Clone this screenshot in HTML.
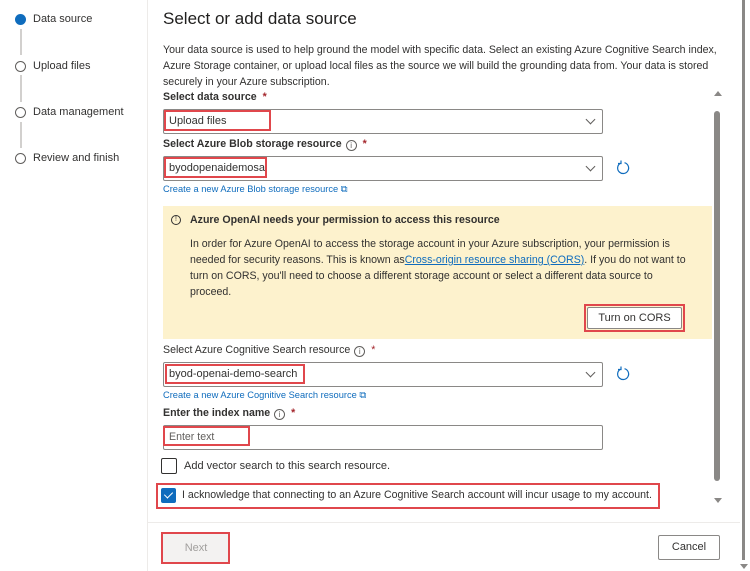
<!DOCTYPE html>
<html><head><meta charset="utf-8"><style>
*{margin:0;padding:0;box-sizing:border-box}
body{width:750px;height:571px;background:#fff;font-family:"Liberation Sans",sans-serif;color:#323130;position:relative;overflow:hidden;font-size:12px}
.a{position:absolute;white-space:nowrap}
.red{position:absolute;border:2px solid #e0474c}
.box{position:absolute;border:1px solid #8a8886;border-radius:2px;background:#fff}
.chev{position:absolute;width:7px;height:7px;border-right:1px solid #605e5c;border-bottom:1px solid #605e5c;transform:rotate(45deg)}
.lbl{font-weight:bold;color:#323130}
.info{display:inline-block;width:11px;height:11px;border:1px solid #605e5c;border-radius:50%;font-size:8px;text-align:center;line-height:9px;color:#605e5c;font-weight:normal;vertical-align:-1px;margin-left:4px}
.star{color:#a4262c;margin-left:6px}
.link{color:#0f6cbd;font-size:9.3px}
</style></head><body>
<div class="a" style="left:15px;top:14px;width:11px;height:11px;border-radius:50%;background:#0f6cbd"></div>
<div class="a" style="left:20px;top:29px;width:2px;height:26px;background:#d2d0ce"></div>
<div class="a" style="left:20px;top:75px;width:2px;height:27px;background:#d2d0ce"></div>
<div class="a" style="left:20px;top:122px;width:2px;height:26px;background:#d2d0ce"></div>
<div class="a" style="left:15px;top:61px;width:11px;height:11px;border-radius:50%;border:1px solid #605e5c"></div>
<div class="a" style="left:15px;top:107px;width:11px;height:11px;border-radius:50%;border:1px solid #605e5c"></div>
<div class="a" style="left:15px;top:153px;width:11px;height:11px;border-radius:50%;border:1px solid #605e5c"></div>
<div class="a" style="left:33px;top:13px;font-size:11px">Data source</div>
<div class="a" style="left:33px;top:60px;font-size:11px">Upload files</div>
<div class="a" style="left:33px;top:106px;font-size:11px">Data management</div>
<div class="a" style="left:33px;top:152px;font-size:11px">Review and finish</div>
<div class="a" style="left:147px;top:0;width:1px;height:571px;background:#edebe9"></div>

<div class="a" style="left:163px;top:9px;font-size:17px;color:#201f1e">Select or add data source</div>
<div class="a" style="left:163px;top:42px;font-size:10.6px;line-height:16px;white-space:normal;width:565px">Your data source is used to help ground the model with specific data. Select an existing Azure Cognitive Search index, Azure Storage container, or upload local files as the source we will build the grounding data from. Your data is stored securely in your Azure subscription.</div>

<div class="a lbl" style="left:163px;top:91px;font-size:10.6px">Select data source<span class="star">*</span></div>
<div class="box" style="left:163px;top:109px;width:440px;height:25px"></div>
<div class="chev" style="left:587px;top:116px"></div>
<div class="red" style="left:164px;top:110px;width:107px;height:21px"></div>
<div class="a" style="left:169px;top:115px;font-size:11px">Upload files</div>

<div class="a lbl" style="left:163px;top:138px;font-size:10.6px">Select Azure Blob storage resource<span class="info">i</span><span class="star">*</span></div>
<div class="box" style="left:163px;top:156px;width:440px;height:25px"></div>
<div class="chev" style="left:587px;top:163px"></div>
<div class="red" style="left:164px;top:157px;width:103px;height:21px"></div>
<div class="a" style="left:169px;top:162px;font-size:11px">byodopenaidemosa</div>
<svg class="a" style="left:615px;top:160px" width="16" height="16" viewBox="0 0 16 16"><path d="M5 3.5A5.5 5.5 0 1 0 9.5 2.7" fill="none" stroke="#0f6cbd" stroke-width="1.2"/><path d="M3 3.5h3v-3" fill="none" stroke="#0f6cbd" stroke-width="1.2"/></svg>
<div class="a link" style="left:163px;top:184px">Create a new Azure Blob storage resource ⧉</div>

<div class="a" style="left:163px;top:206px;width:549px;height:133px;background:#fdf2cd"></div>
<div class="a" style="left:171px;top:215px;width:10px;height:10px;border:1px solid #323130;border-radius:50%;font-size:7px;text-align:center;line-height:8px">!</div>
<div class="a" style="left:190px;top:214px;font-weight:bold;font-size:10.6px">Azure OpenAI needs your permission to access this resource</div>
<div class="a" style="left:190px;top:236px;font-size:10.6px;line-height:16px;white-space:normal;width:500px">In order for Azure OpenAI to access the storage account in your Azure subscription, your permission is needed for security reasons. This is known as<span style="color:#0f6cbd;text-decoration:underline">Cross-origin resource sharing (CORS)</span>. If you do not want to turn on CORS, you'll need to choose a different storage account or select a different data source to proceed.</div>
<div class="red" style="left:584px;top:304px;width:101px;height:28px"></div>
<div class="a" style="left:587px;top:307px;width:95px;height:22px;background:#fff;border:1px solid #8a8886;border-radius:2px;text-align:center;line-height:20px;font-size:11px">Turn on CORS</div>

<div class="a" style="left:163px;top:344px;font-size:10.6px">Select Azure Cognitive Search resource<span class="info">i</span><span class="star">*</span></div>
<div class="box" style="left:163px;top:362px;width:440px;height:25px"></div>
<div class="chev" style="left:587px;top:369px"></div>
<div class="red" style="left:165px;top:364px;width:140px;height:20px"></div>
<div class="a" style="left:169px;top:368px;font-size:11px">byod-openai-demo-search</div>
<svg class="a" style="left:615px;top:366px" width="16" height="16" viewBox="0 0 16 16"><path d="M5 3.5A5.5 5.5 0 1 0 9.5 2.7" fill="none" stroke="#0f6cbd" stroke-width="1.2"/><path d="M3 3.5h3v-3" fill="none" stroke="#0f6cbd" stroke-width="1.2"/></svg>
<div class="a link" style="left:163px;top:390px">Create a new Azure Cognitive Search resource ⧉</div>

<div class="a lbl" style="left:163px;top:407px;font-size:10.6px">Enter the index name<span class="info">i</span><span class="star">*</span></div>
<div class="box" style="left:163px;top:425px;width:440px;height:25px"></div>
<div class="red" style="left:163px;top:426px;width:87px;height:20px"></div>
<div class="a" style="left:169px;top:431px;font-size:10.6px;color:#605e5c">Enter text</div>

<div class="a" style="left:161px;top:458px;width:16px;height:16px;border:1px solid #323130;border-radius:2px"></div>
<div class="a" style="left:184px;top:460px;font-size:11px">Add vector search to this search resource.</div>
<div class="red" style="left:156px;top:483px;width:504px;height:26px"></div>
<div class="a" style="left:161px;top:488px;width:15px;height:15px;background:#0f6cbd;border-radius:2px"></div>
<div class="a" style="left:166px;top:490px;width:5px;height:8px;border-right:1.5px solid #fff;border-bottom:1.5px solid #fff;transform:rotate(45deg)"></div>
<div class="a" style="left:182px;top:489px;font-size:10.6px">I acknowledge that connecting to an Azure Cognitive Search account will incur usage to my account.</div>

<div class="a" style="left:714px;top:91px;width:0;height:0;border-left:4px solid transparent;border-right:4px solid transparent;border-bottom:5px solid #8a8886"></div>
<div class="a" style="left:714px;top:111px;width:6px;height:370px;background:#8a8886;border-radius:3px"></div>
<div class="a" style="left:714px;top:498px;width:0;height:0;border-left:4px solid transparent;border-right:4px solid transparent;border-top:5px solid #8a8886"></div>

<div class="a" style="left:148px;top:522px;width:592px;height:1px;background:#edebe9"></div>
<div class="a" style="left:163px;top:534px;width:66px;height:29px;background:#f3f2f1"></div>
<div class="red" style="left:161px;top:532px;width:69px;height:32px"></div>
<div class="a" style="left:163px;top:542px;width:66px;text-align:center;color:#a19f9d;font-size:11px">Next</div>
<div class="a" style="left:658px;top:535px;width:62px;height:25px;border:1px solid #8a8886;border-radius:2px;text-align:center;line-height:23px;font-size:11px">Cancel</div>

<div class="a" style="left:742px;top:0;width:3px;height:560px;background:#8a8886"></div>
<div class="a" style="left:740px;top:564px;width:0;height:0;border-left:4px solid transparent;border-right:4px solid transparent;border-top:5px solid #8a8886"></div>
</body></html>
